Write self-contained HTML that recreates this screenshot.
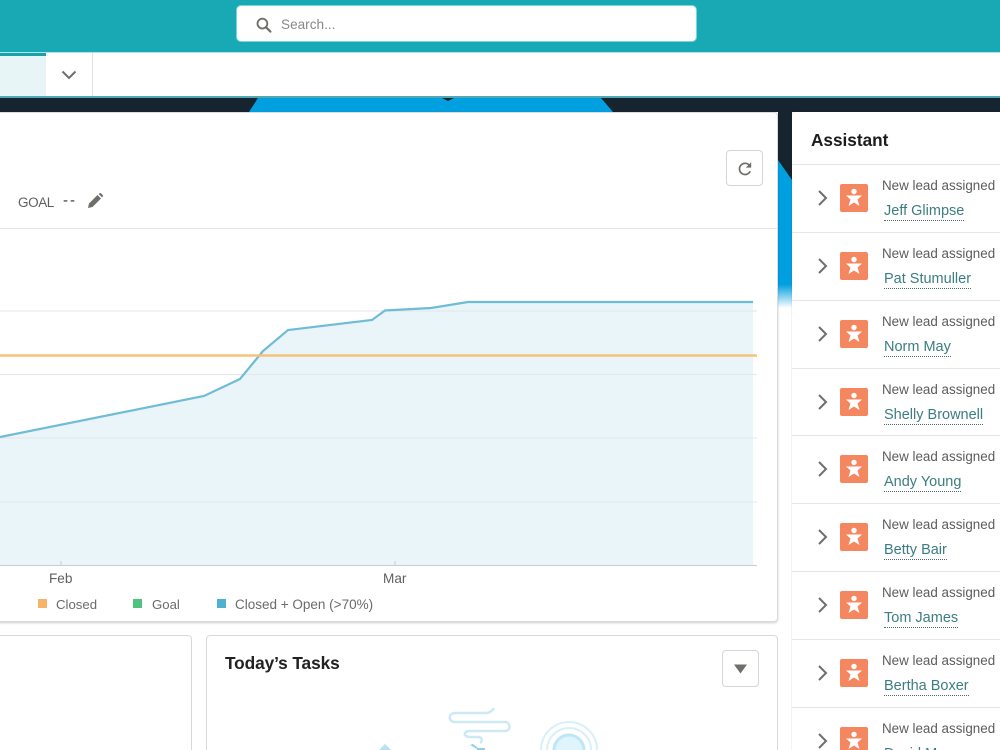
<!DOCTYPE html>
<html>
<head>
<meta charset="utf-8">
<style>
html,body{margin:0;padding:0;width:1000px;height:750px;overflow:hidden;background:#fff}
#w{position:relative;width:1000px;height:750px;overflow:hidden;background:#fff;font-family:"Liberation Sans",sans-serif;color:#3e3e3c}
.a{position:absolute}
.item{position:absolute;left:792px;width:208px;height:68px;border-top:1px solid #e6e6e6;box-sizing:border-box}
.item .msg{position:absolute;left:90px;top:11.500px;font-size:13.4px;line-height:18px;color:#5c5c5c;white-space:nowrap}
.item .nm{position:absolute;left:92px;top:36px;font-size:14.5px;line-height:20px;color:#3c7d83;white-space:nowrap;border-bottom:1px dotted #4a6a6e;height:18.500px}
.item svg{position:absolute;left:24px;top:19px}
.t{position:absolute;white-space:nowrap}
</style>
</head>
<body>
<div id="w">
<svg width="0" height="0" style="position:absolute"><symbol id="ic" viewBox="0 0 60 36"><path d="M3 7L10 14L3 21" fill="none" stroke="#706e6b" stroke-width="2"/><rect x="24" y="0" width="28" height="28" rx="2" fill="#f58760"/><circle cx="38" cy="7.500" r="2.700" fill="#fff"/><path d="M30 11.500H46L41.500 15.500L43.500 22L38 18.500L32.500 22L34.500 15.500Z" fill="#fff"/></symbol></svg>

<div class="a" style="left:0;top:0;width:1000px;height:52px;background:#19a9b4"></div>
<div class="a" style="left:237px;top:6px;width:459px;height:35px;background:#fff;border-radius:4px;box-shadow:0 0 0 1px #7fd3da"></div>
<svg class="a" style="left:255px;top:16px" width="18" height="18" viewBox="0 0 18 18"><circle cx="7.400" cy="7.600" r="4.900" fill="none" stroke="#706e6b" stroke-width="1.800"/><path d="M11 11.200L15.400 15.600" stroke="#706e6b" stroke-width="2.200" stroke-linecap="round"/></svg>
<div class="t" style="left:281px;top:16px;font-size:13.600px;line-height:18px;color:#8a8886">Search...</div>

<div class="a" style="left:0;top:52px;width:1000px;height:44px;background:#fff;border-top:1px solid #a9e6ea;box-sizing:border-box"></div>
<div class="a" style="left:0;top:53px;width:46px;height:43px;background:#e8f5f7;border-top:3px solid #19a0ac;box-sizing:border-box"></div>
<div class="a" style="left:92px;top:53px;width:1px;height:43px;background:#e2e2e2"></div>
<svg class="a" style="left:60px;top:68px" width="18" height="14" viewBox="0 0 18 14"><path d="M2.500 3.500L9 10L15.500 3.500" fill="none" stroke="#706e6b" stroke-width="2"/></svg>
<div class="a" style="left:0;top:96px;width:1000px;height:2px;background:#4fa9b5"></div>

<div class="a" style="left:0;top:98px;width:1000px;height:14px;background:#16242f"></div>
<svg class="a" style="left:0;top:98px" width="1000" height="220" viewBox="0 0 1000 220">
<defs><linearGradient id="g" x1="0" y1="0" x2="0" y2="1"><stop offset="0" stop-color="#009fdf"/><stop offset=".84" stop-color="#009fdf"/><stop offset="1" stop-color="#ffffff"/></linearGradient></defs>
<rect x="778" y="0" width="14" height="220" fill="#16242f"/>
<rect x="778" y="200" width="14" height="20" fill="#fff"/>
<path d="M778 62L792 82V210H778Z" fill="url(#g)"/>
<path d="M249 14L258 0H442L448 3L454 0H601L613 14Z" fill="#009fdf"/>
</svg>

<div class="a" style="left:-6px;top:112px;width:784px;height:510px;background:#fff;border-radius:4px;box-shadow:0 1px 2px rgba(0,0,0,.2);border:1px solid #dcdcdc;box-sizing:border-box"></div>
<div class="t" style="left:18px;top:194px;font-size:13.500px;line-height:18px;color:#5f5f5f;letter-spacing:-.4px">GOAL</div>
<div class="t" style="left:63px;top:192px;font-size:15px;line-height:18px;color:#333;letter-spacing:2px">--</div>
<svg class="a" style="left:86px;top:192px" width="18" height="18" viewBox="0 0 18 18"><path d="M2 16L3 11.500L11.500 3L15 6.500L6.500 15Z M12.600 2L13.600 1.200C14 .9 14.500 .9 14.900 1.200L16.800 3.100C17.100 3.500 17.100 4 16.800 4.400L16 5.400Z" fill="#706e6b"/></svg>
<div class="a" style="left:726px;top:150px;width:37px;height:36px;border:1px solid #d5d5d5;border-radius:4px;box-sizing:border-box;background:#fff"></div>
<svg class="a" style="left:736px;top:160px" width="18" height="18" viewBox="0 0 18 18"><path d="M13.600 5.600A5.600 5.600 0 1 0 14.200 11.200" fill="none" stroke="#706e6b" stroke-width="1.700"/><path d="M15.200 2.200V7.600H9.800Z" fill="#706e6b"/></svg>
<div class="a" style="left:0;top:228px;width:777px;height:1px;background:#e5e5e5"></div>

<svg class="a" style="left:0;top:290px" width="778" height="300" viewBox="0 0 778 300">
<path d="M0 147L204 106L240 89L263 61L288 40L372 30L385 20.500L431 18L468 12H753V275H0Z" fill="#eaf5fa"/>
<g stroke="#e4e6e8" stroke-width="1"><path d="M0 21H757M0 84.500H757M0 148H757M0 212H757"/></g>
<path d="M0 275.500H757" stroke="#c9ced6" stroke-width="1"/>
<path d="M61 271V275M395 271V275" stroke="#c9ced6" stroke-width="1"/>
<path d="M0 147L204 106L240 89L263 61L288 40L372 30L385 20.500L431 18L468 12H753" fill="none" stroke="#6fbcd6" stroke-width="2.200"/>
<path d="M0 65.500H757" stroke="#f6c27a" stroke-width="2.400"/>
</svg>
<div class="t" style="left:49px;top:570px;font-size:13.600px;line-height:18px;color:#5f5f5f">Feb</div>
<div class="t" style="left:383px;top:570px;font-size:13.600px;line-height:18px;color:#5f5f5f">Mar</div>
<div class="a" style="left:38px;top:599px;width:9px;height:9px;background:#f6b566"></div>
<div class="t" style="left:56px;top:596px;font-size:13.200px;line-height:18px;color:#6b6b6b">Closed</div>
<div class="a" style="left:133px;top:599px;width:9px;height:9px;background:#4fc27f"></div>
<div class="t" style="left:152px;top:596px;font-size:13.200px;line-height:18px;color:#6b6b6b">Goal</div>
<div class="a" style="left:217px;top:599px;width:9px;height:9px;background:#4fb0d0"></div>
<div class="t" style="left:235px;top:596px;font-size:13.500px;line-height:18px;color:#6b6b6b">Closed + Open (&gt;70%)</div>

<div class="a" style="left:-6px;top:635px;width:198px;height:130px;background:#fff;border:1px solid #d8d8d8;border-radius:4px;box-sizing:border-box"></div>
<div class="a" style="left:206px;top:635px;width:572px;height:130px;background:#fff;border:1px solid #d8d8d8;border-radius:4px;box-sizing:border-box"></div>
<div class="t" style="left:225px;top:652px;font-size:17.300px;line-height:22px;font-weight:bold;color:#222;letter-spacing:-.1px">Today’s Tasks</div>
<div class="a" style="left:722px;top:650px;width:37px;height:37px;border:1px solid #d5d5d5;border-radius:4px;box-sizing:border-box;background:#fff"></div>
<svg class="a" style="left:733px;top:664px" width="15" height="10" viewBox="0 0 15 10"><path d="M1 .5H14L7.500 9.500Z" fill="#706e6b"/></svg>

<svg class="a" style="left:370px;top:700px" width="240" height="50" viewBox="0 0 240 50">
<path d="M124 8C122 12 118 13 116 13H85C78 13 78 22 85 22H135C141 22 141 31 135 31H100C93 31 93 37 100 37H108C112 37 113 41 110 43" fill="none" stroke="#cde9f5" stroke-width="2.500"/>
<path d="M100 45L107 49V50H115V48H108L103 44Z" fill="#8fd0e8"/>
<path d="M15 44L9 50H21Z" fill="#b6e2f2"/>
<circle cx="199" cy="50" r="28" fill="none" stroke="#d8f0f9" stroke-width="2"/>
<circle cx="199" cy="50" r="22" fill="none" stroke="#d8f0f9" stroke-width="2"/>
<circle cx="199" cy="50" r="15" fill="#dff4fc" stroke="#bfe6f5" stroke-width="3"/>
</svg>

<div class="a" style="left:792px;top:112px;width:220px;height:650px;background:#fff;border-radius:4px;box-shadow:0 0 1px rgba(0,0,0,.3)"></div>
<div class="t" style="left:811px;top:129px;font-size:17.200px;line-height:22px;font-weight:bold;color:#1c1c1c">Assistant</div>

<div class="item" style="top:164px"><svg width="60" height="36"><use href="#ic"/></svg><div class="msg">New lead assigned</div><div class="nm">Jeff Glimpse</div></div>
<div class="item" style="top:232px"><svg width="60" height="36"><use href="#ic"/></svg><div class="msg">New lead assigned</div><div class="nm">Pat Stumuller</div></div>
<div class="item" style="top:300px"><svg width="60" height="36"><use href="#ic"/></svg><div class="msg">New lead assigned</div><div class="nm">Norm May</div></div>
<div class="item" style="top:368px"><svg width="60" height="36"><use href="#ic"/></svg><div class="msg">New lead assigned</div><div class="nm">Shelly Brownell</div></div>
<div class="item" style="top:435px"><svg width="60" height="36"><use href="#ic"/></svg><div class="msg">New lead assigned</div><div class="nm">Andy Young</div></div>
<div class="item" style="top:503px"><svg width="60" height="36"><use href="#ic"/></svg><div class="msg">New lead assigned</div><div class="nm">Betty Bair</div></div>
<div class="item" style="top:571px"><svg width="60" height="36"><use href="#ic"/></svg><div class="msg">New lead assigned</div><div class="nm">Tom James</div></div>
<div class="item" style="top:639px"><svg width="60" height="36"><use href="#ic"/></svg><div class="msg">New lead assigned</div><div class="nm">Bertha Boxer</div></div>
<div class="item" style="top:707px"><svg width="60" height="36"><use href="#ic"/></svg><div class="msg">New lead assigned</div><div class="nm">David Monaco</div></div>
</div>
</body>
</html>
